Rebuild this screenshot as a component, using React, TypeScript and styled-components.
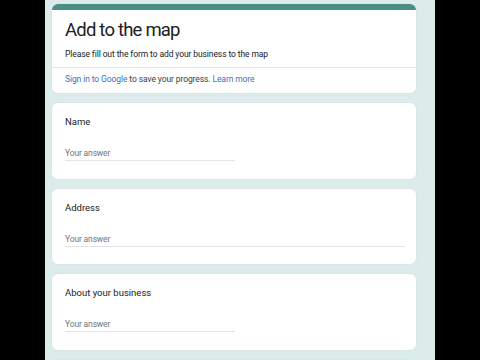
import * as React from 'react';
import styled, { createGlobalStyle } from 'styled-components';

const GlobalStyle = createGlobalStyle`
    html, body {
        margin: 0;
        padding: 0;
        background: #000;
    }
    * {
        box-sizing: border-box;
    }
`;

const Page = styled.div`
    width: 390px;
    height: 360px;
    margin: 0 45px;
    padding: 3px 18px 0 6px;
    background: #dcecea;
    overflow: hidden;
    display: flex;
    flex-direction: column;
    gap: 8px;
    font-family: Roboto, 'Liberation Sans', sans-serif;
    color: #202124;
`;

const Card = styled.div<{ h: number }>`
    flex: 0 0 auto;
    height: ${(p) => p.h}px;
    background: #fff;
    border: 1px solid #dbe5e3;
    border-radius: 7px;
    overflow: hidden;
`;

const HeaderBar = styled.div`
    height: 6px;
    background: #4a8e84;
`;

const HeaderBody = styled.div`
    padding: 8px 14px 7px 13px;
    border-bottom: 1px solid #e6e9ea;
`;

const Title = styled.h1`
    margin: 0 0 6px;
    font-size: 18.5px;
    line-height: 24px;
    font-weight: 400;
    letter-spacing: -0.8px;
`;

const Description = styled.p`
    margin: 0;
    font-size: 8.5px;
    line-height: 12px;
    letter-spacing: -0.1px;
`;

const SignInRow = styled.div`
    padding: 5px 13px;
    font-size: 8.5px;
    line-height: 12px;
    letter-spacing: -0.1px;
    color: #3c4043;
`;

const Link = styled.a`
    color: #3f6fc4;
    text-decoration: none;
`;

const Question = styled.div`
    padding: 12px 13px 0;
`;

const Label = styled.div`
    font-size: 9.5px;
    line-height: 14px;
`;

const Answer = styled.div<{ wide?: boolean }>`
    margin-top: 18px;
    width: ${(p) => (p.wide ? 340 : 170)}px;
    font-size: 8.5px;
    line-height: 12px;
    letter-spacing: -0.15px;
    color: #70757a;
    padding-bottom: 1px;
    border-bottom: 1px solid #e3e5e6;
`;

const questions = [
    { label: 'Name', h: 78 },
    { label: 'Address', h: 77, wide: true },
    { label: 'About your business', h: 78 },
];

export default function App() {
    return (
        <>
            <GlobalStyle />
            <Page>
                <Card h={91}>
                    <HeaderBar />
                    <HeaderBody>
                        <Title>Add to the map</Title>
                        <Description>Please fill out the form to add your business to the map</Description>
                    </HeaderBody>
                    <SignInRow>
                        <Link>Sign in to Google</Link> to save your progress. <Link>Learn more</Link>
                    </SignInRow>
                </Card>
                {questions.map((q) => (
                    <Card key={q.label} h={q.h}>
                        <Question>
                            <Label>{q.label}</Label>
                            <Answer wide={q.wide}>Your answer</Answer>
                        </Question>
                    </Card>
                ))}
                <Card h={40} />
            </Page>
        </>
    );
}
